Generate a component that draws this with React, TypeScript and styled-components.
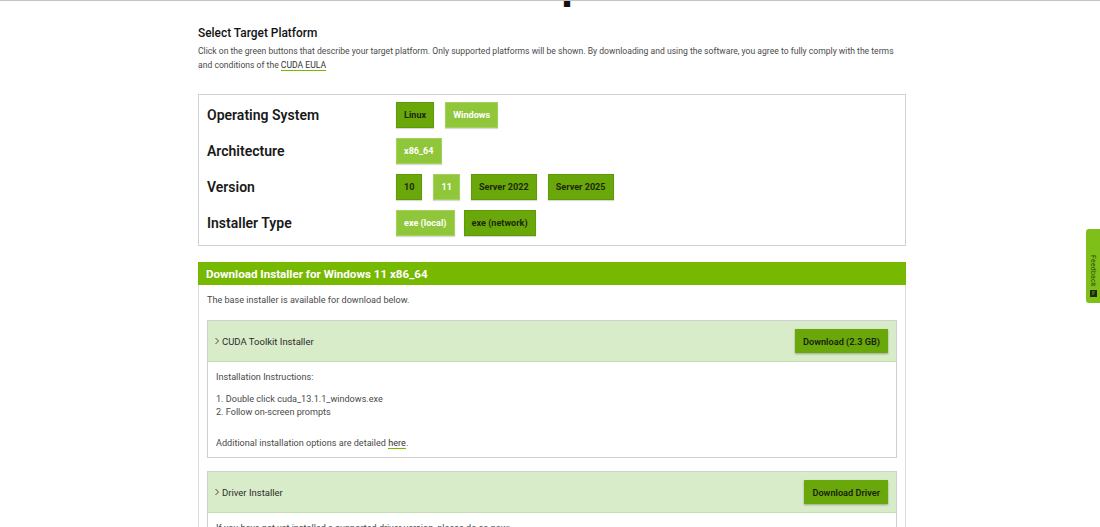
import React from "react";
import styled, { createGlobalStyle } from "styled-components";

const GlobalStyle = createGlobalStyle`
  html, body {
    margin: 0;
    padding: 0;
    background: #ffffff;
    font-family: Roboto, "Liberation Sans", sans-serif;
    color: #1a1a1a;
  }
`;

const green = "#76b900";

const Page = styled.div`
  width: 1100px;
  height: 527px;
  overflow: hidden;
  position: relative;
  padding-left: 4px;
  box-sizing: border-box;
`;

const TopClip = styled.div`
  border-top: 1px solid #c4c4c4;
  height: 6px;
  overflow: hidden;
  margin-left: -4px;
  text-align: center;
`;

const BigTitle = styled.h1`
  margin: -37px 0 0;
  font-size: 44px;
  line-height: 44px;
  font-weight: 700;
  color: #111;
  white-space: nowrap;
`;

const Main = styled.main`
  width: 708px;
  margin: 0 auto;
`;

const SectionTitle = styled.h2`
  margin: 19px 0 0;
  font-size: 11.9px;
  line-height: 14px;
  font-weight: 500;
  color: #111;
`;

const Intro = styled.p`
  margin: 4px 0 0;
  font-size: 8.6px;
  line-height: 14px;
  color: #4a4a4a;
`;

const Link = styled.a`
  color: #333;
  text-decoration: none;
  border-bottom: 1px solid ${green};
`;

const Selector = styled.div`
  margin-top: 22px;
  border: 1px solid #d2d2d2;
  padding: 2px 8px 4px;
`;

const Row = styled.div`
  display: flex;
  align-items: center;
  height: 36px;
`;

const Label = styled.div`
  width: 189px;
  font-size: 14px;
  font-weight: 600;
  color: #1a1a1a;
`;

const Options = styled.div<{ $gap?: number }>`
  display: flex;
  gap: ${p => p.$gap ?? 11}px;
`;

const Toggle = styled.button<{ $selected?: boolean }>`
  height: 26px;
  padding: 0 7px;
  min-width: 24px;
  box-sizing: border-box;
  font-family: Roboto, "Liberation Sans", sans-serif;
  font-size: 9.1px;
  font-weight: 700;
  cursor: pointer;
  border: 1px solid ${p => (p.$selected ? "#a4d15c" : "#5f9a06")};
  background: ${p => (p.$selected ? "#8fc63a" : "#6aa70b")};
  color: ${p => (p.$selected ? "#ffffff" : "#1c2a05")};
  box-shadow: 0 1px 1px rgba(0, 0, 0, 0.15);
`;

const Panel = styled.section`
  margin-top: 16px;
  border: 1px solid #dcdcdc;
  border-top: none;
`;

const PanelHeader = styled.div`
  background: ${green};
  color: #fff;
  height: 23px;
  display: flex;
  align-items: center;
  padding-left: 8px;
  font-size: 11.6px;
  font-weight: 700;
  margin: 0 -1px;
`;

const PanelBody = styled.div`
  padding: 8px 8px 0;
`;

const Note = styled.p`
  margin: 0 0 13px;
  font-size: 9.1px;
  line-height: 14px;
  color: #4a4a4a;
`;

const Card = styled.div`
  border: 1px solid #cfcfcf;
  margin-bottom: 13px;
`;

const CardHeader = styled.div`
  height: 40px;
  background: #d9ecca;
  border-bottom: 1px solid #c3dfae;
  display: flex;
  align-items: center;
  justify-content: space-between;
  padding: 0 8px 0 6px;
`;

const CardTitle = styled.div`
  font-size: 9.5px;
  color: #2b2b2b;
  display: flex;
  align-items: center;
  gap: 2px;
`;

const DownloadButton = styled.button`
  height: 24px;
  padding: 0 8px;
  border: none;
  background: #6aa70b;
  color: #17230a;
  font-family: Roboto, "Liberation Sans", sans-serif;
  font-size: 9.2px;
  font-weight: 600;
  box-shadow: 0 1px 2px rgba(0, 0, 0, 0.3);
  cursor: pointer;
`;

const CardBody = styled.div`
  padding: 9px 8px 7px;
  font-size: 9.1px;
  line-height: 13px;
  color: #4a4a4a;
`;

const Para = styled.p<{ $gap?: number }>`
  margin: 0 0 ${p => p.$gap ?? 0}px;
`;

const FeedbackTab = styled.div`
  position: absolute;
  right: 0;
  top: 229px;
  width: 14px;
  height: 74px;
  background: #7fbf1a;
  border-radius: 3px 0 0 3px;
  display: flex;
  flex-direction: column;
  align-items: center;
  justify-content: flex-end;
  gap: 3px;
  padding-bottom: 6px;
  box-sizing: border-box;
`;

const FeedbackText = styled.span`
  writing-mode: vertical-rl;
  font-size: 7px;
  color: #2c4a06;
  letter-spacing: 0.2px;
`;

const Chevron = () => (
  <svg width="6" height="8" viewBox="0 0 6 8">
    <path d="M1.5 1 L4.5 4 L1.5 7" fill="none" stroke="#333" strokeWidth="0.9" />
  </svg>
);

const FeedbackIcon = () => (
  <svg width="7" height="7" viewBox="0 0 7 7">
    <rect x="0" y="0" width="7" height="7" fill="#1d2b0a" />
    <path d="M2 2 H5 M2 4 H4" stroke="#7fbf1a" strokeWidth="0.8" />
  </svg>
);

export default function App() {
  return (
    <Page>
      <GlobalStyle />
      <TopClip>
        <BigTitle>CUDA Toolkit 13.1 Update 1 Downloads</BigTitle>
      </TopClip>
      <Main>
        <SectionTitle>Select Target Platform</SectionTitle>
        <Intro>
          Click on the green buttons that describe your target platform. Only supported platforms will be shown. By
          downloading and using the software, you agree to fully comply with the terms and conditions of the{" "}
          <Link href="#">CUDA EULA</Link>
        </Intro>

        <Selector>
          <Row>
            <Label>Operating System</Label>
            <Options>
              <Toggle>Linux</Toggle>
              <Toggle $selected>Windows</Toggle>
            </Options>
          </Row>
          <Row>
            <Label>Architecture</Label>
            <Options>
              <Toggle $selected>x86_64</Toggle>
            </Options>
          </Row>
          <Row>
            <Label>Version</Label>
            <Options>
              <Toggle>10</Toggle>
              <Toggle $selected>11</Toggle>
              <Toggle>Server 2022</Toggle>
              <Toggle>Server 2025</Toggle>
            </Options>
          </Row>
          <Row>
            <Label>Installer Type</Label>
            <Options $gap={9}>
              <Toggle $selected>exe (local)</Toggle>
              <Toggle>exe (network)</Toggle>
            </Options>
          </Row>
        </Selector>

        <Panel>
          <PanelHeader>Download Installer for Windows 11 x86_64</PanelHeader>
          <PanelBody>
            <Note>The base installer is available for download below.</Note>
            <Card>
              <CardHeader>
                <CardTitle>
                  <Chevron />
                  CUDA Toolkit Installer
                </CardTitle>
                <DownloadButton>Download (2.3 GB)</DownloadButton>
              </CardHeader>
              <CardBody>
                <Para $gap={9}>Installation Instructions:</Para>
                <Para>1. Double click cuda_13.1.1_windows.exe</Para>
                <Para $gap={18}>2. Follow on-screen prompts</Para>
                <Para>
                  Additional installation options are detailed <Link href="#">here</Link>.
                </Para>
              </CardBody>
            </Card>
            <Card>
              <CardHeader>
                <CardTitle>
                  <Chevron />
                  Driver Installer
                </CardTitle>
                <DownloadButton>Download Driver</DownloadButton>
              </CardHeader>
              <CardBody>
                <Para>If you have not yet installed a supported driver version, please do so now:</Para>
              </CardBody>
            </Card>
          </PanelBody>
        </Panel>
      </Main>
      <FeedbackTab>
        <FeedbackText>Feedback</FeedbackText>
        <FeedbackIcon />
      </FeedbackTab>
    </Page>
  );
}
